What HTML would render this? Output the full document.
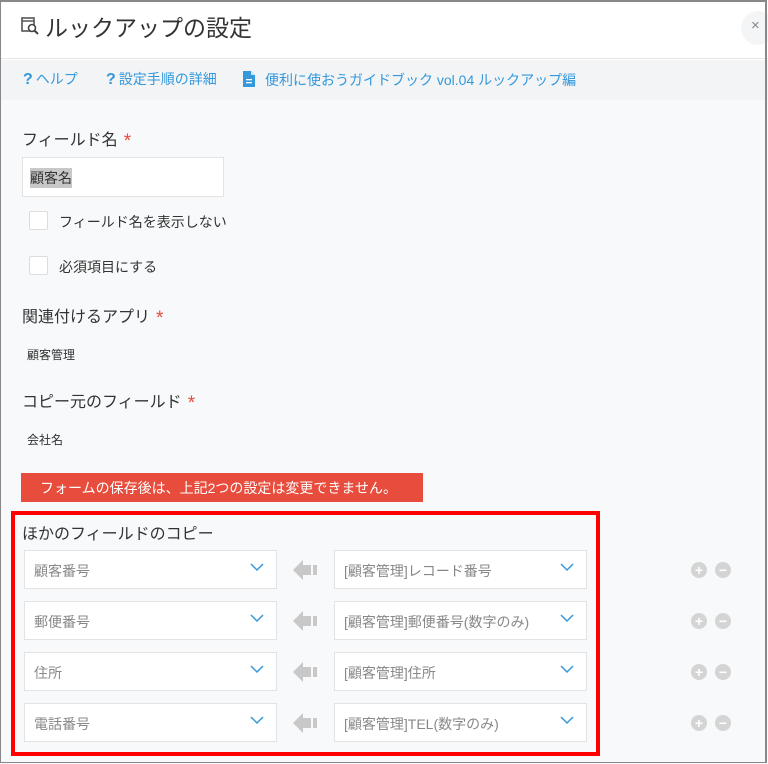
<!DOCTYPE html>
<html><head><meta charset="utf-8"><style>
*{margin:0;padding:0;box-sizing:border-box}
body{width:768px;height:764px;overflow:hidden;background:#fff;font-family:"Liberation Sans","Noto Sans CJK JP",sans-serif;position:relative}
.a{position:absolute;white-space:nowrap}
.frame{position:absolute;left:0;top:0;width:767px;height:763px;border:1px solid #888;border-top:2px solid #888;border-right:2px solid #888;pointer-events:none;z-index:10}
.lbl{font-size:16px;color:#333}
.req{color:#e74c3c;margin-left:6px;font-size:19px;line-height:16px;vertical-align:-2px}
.sel{position:absolute;height:39px;background:#fff;border:1px solid #e3e3e3;font-size:14px;color:#888;padding:10px 0 0 9px}
.chev{position:absolute;right:12px;top:12px}
.circ{position:absolute;width:16px;height:16px;border-radius:50%;background:#d4d4d4;color:#fff;font-size:14px;line-height:16px;text-align:center;font-weight:bold}
.cb{position:absolute;width:19px;height:19px;background:#fff;border:1px solid #ddd;border-radius:2px}
.q{font-size:16px;font-weight:bold;margin-right:3px}
</style></head><body>
<div class="frame"></div>
<div class="a" style="left:0;top:0;width:768px;height:59px;background:#fff;border-bottom:1px solid #e6e6e6"></div>
<svg class="a" style="left:21px;top:17px" width="20" height="18" viewBox="0 0 20 18"><rect x="1" y="1" width="12" height="13" fill="none" stroke="#555" stroke-width="1.6"/><line x1="1" y1="4" x2="13" y2="4" stroke="#555" stroke-width="1.5"/><circle cx="11" cy="11" r="3.5" fill="#fff" stroke="#444" stroke-width="1.6"/><line x1="13.5" y1="13.5" x2="17" y2="17" stroke="#444" stroke-width="2"/></svg>
<div class="a" style="left:45px;top:9px;font-size:23px;color:#333">ルックアップの設定</div>
<div class="a" style="left:741px;top:11px;width:34px;height:34px;border-radius:50%;background:#f4f5f6"></div>
<div class="a" style="left:751px;top:17px;font-size:15px;color:#888">×</div>
<div class="a" style="left:0;top:60px;width:768px;height:40px;background:#f2f4f6"></div>
<div class="a" style="left:23px;top:69px;font-size:14px;color:#3498db"><span class="q">?</span>ヘルプ</div>
<div class="a" style="left:106px;top:69px;font-size:14px;color:#3498db"><span class="q">?</span>設定手順の詳細</div>
<svg class="a" style="left:243px;top:71px" width="12" height="16" viewBox="0 0 12 16"><path d="M0 0H8L12 4V16H0Z" fill="#3498db"/><path d="M8 0V4H12" fill="#cfe6f6"/><rect x="3" y="8" width="6" height="1.3" fill="#fff"/><rect x="3" y="11" width="6" height="1.3" fill="#fff"/></svg>
<div class="a" style="left:265px;top:70px;font-size:14px;color:#3498db">便利に使おうガイドブック vol.04 ルックアップ編</div>
<div class="a" style="left:0;top:100px;width:768px;height:664px;background:#f7f9fa"></div>
<div class="a lbl" style="left:22px;top:126px">フィールド名<span class="req">*</span></div>
<div class="a" style="left:22px;top:157px;width:202px;height:40px;background:#fff;border:1px solid #e3e3e3"></div>
<div class="a" style="left:30px;top:168px;font-size:14px;color:#333;background:#c8c8c8">顧客名</div>
<div class="cb" style="left:29px;top:211px"></div>
<div class="a" style="left:59px;top:212px;font-size:14px;color:#333">フィールド名を表示しない</div>
<div class="cb" style="left:29px;top:256px"></div>
<div class="a" style="left:59px;top:257px;font-size:14px;color:#333">必須項目にする</div>
<div class="a lbl" style="left:22px;top:303px">関連付けるアプリ<span class="req">*</span></div>
<div class="a" style="left:27px;top:346px;font-size:12px;color:#333">顧客管理</div>
<div class="a lbl" style="left:22px;top:388px">コピー元のフィールド<span class="req">*</span></div>
<div class="a" style="left:27px;top:431px;font-size:12px;color:#333">会社名</div>
<div class="a" style="left:21px;top:473px;width:402px;height:29px;background:#e74c3c;color:#fff;font-size:14px;padding:5px 0 0 19px">フォームの保存後は、上記2つの設定は変更できません。</div>
<div class="a" style="left:11px;top:511px;width:589px;height:245px;border:4px solid #f00"></div>
<div class="a" style="left:22px;top:520px;font-size:16px;color:#333">ほかのフィールドのコピー</div>

<div class="sel" style="left:24px;top:550px;width:253px">顧客番号<svg class="chev" width="14" height="9" viewBox="0 0 14 9"><path d="M1 1L7 7L13 1" fill="none" stroke="#3498db" stroke-width="1.5"/></svg></div>
<div class="sel" style="left:334px;top:550px;width:253px">[顧客管理]レコード番号<svg class="chev" width="14" height="9" viewBox="0 0 14 9"><path d="M1 1L7 7L13 1" fill="none" stroke="#3498db" stroke-width="1.5"/></svg></div>
<div class="sel" style="left:24px;top:601px;width:253px">郵便番号<svg class="chev" width="14" height="9" viewBox="0 0 14 9"><path d="M1 1L7 7L13 1" fill="none" stroke="#3498db" stroke-width="1.5"/></svg></div>
<div class="sel" style="left:334px;top:601px;width:253px">[顧客管理]郵便番号(数字のみ)<svg class="chev" width="14" height="9" viewBox="0 0 14 9"><path d="M1 1L7 7L13 1" fill="none" stroke="#3498db" stroke-width="1.5"/></svg></div>
<div class="sel" style="left:24px;top:652px;width:253px">住所<svg class="chev" width="14" height="9" viewBox="0 0 14 9"><path d="M1 1L7 7L13 1" fill="none" stroke="#3498db" stroke-width="1.5"/></svg></div>
<div class="sel" style="left:334px;top:652px;width:253px">[顧客管理]住所<svg class="chev" width="14" height="9" viewBox="0 0 14 9"><path d="M1 1L7 7L13 1" fill="none" stroke="#3498db" stroke-width="1.5"/></svg></div>
<div class="sel" style="left:24px;top:703px;width:253px">電話番号<svg class="chev" width="14" height="9" viewBox="0 0 14 9"><path d="M1 1L7 7L13 1" fill="none" stroke="#3498db" stroke-width="1.5"/></svg></div>
<div class="sel" style="left:334px;top:703px;width:253px">[顧客管理]TEL(数字のみ)<svg class="chev" width="14" height="9" viewBox="0 0 14 9"><path d="M1 1L7 7L13 1" fill="none" stroke="#3498db" stroke-width="1.5"/></svg></div>

<svg class="a" style="left:293px;top:560px" width="26" height="20" viewBox="0 0 26 20"><path d="M0 10L10 0V5H18V15H10V20Z" fill="#c8c8c8"/><rect x="20" y="5" width="4" height="10" fill="#c8c8c8"/></svg>
<svg class="a" style="left:293px;top:611px" width="26" height="20" viewBox="0 0 26 20"><path d="M0 10L10 0V5H18V15H10V20Z" fill="#c8c8c8"/><rect x="20" y="5" width="4" height="10" fill="#c8c8c8"/></svg>
<svg class="a" style="left:293px;top:662px" width="26" height="20" viewBox="0 0 26 20"><path d="M0 10L10 0V5H18V15H10V20Z" fill="#c8c8c8"/><rect x="20" y="5" width="4" height="10" fill="#c8c8c8"/></svg>
<svg class="a" style="left:293px;top:713px" width="26" height="20" viewBox="0 0 26 20"><path d="M0 10L10 0V5H18V15H10V20Z" fill="#c8c8c8"/><rect x="20" y="5" width="4" height="10" fill="#c8c8c8"/></svg>

<div class="circ" style="left:691px;top:562px">+</div><div class="circ" style="left:715px;top:562px">−</div>
<div class="circ" style="left:691px;top:613px">+</div><div class="circ" style="left:715px;top:613px">−</div>
<div class="circ" style="left:691px;top:664px">+</div><div class="circ" style="left:715px;top:664px">−</div>
<div class="circ" style="left:691px;top:715px">+</div><div class="circ" style="left:715px;top:715px">−</div>
</body></html>
